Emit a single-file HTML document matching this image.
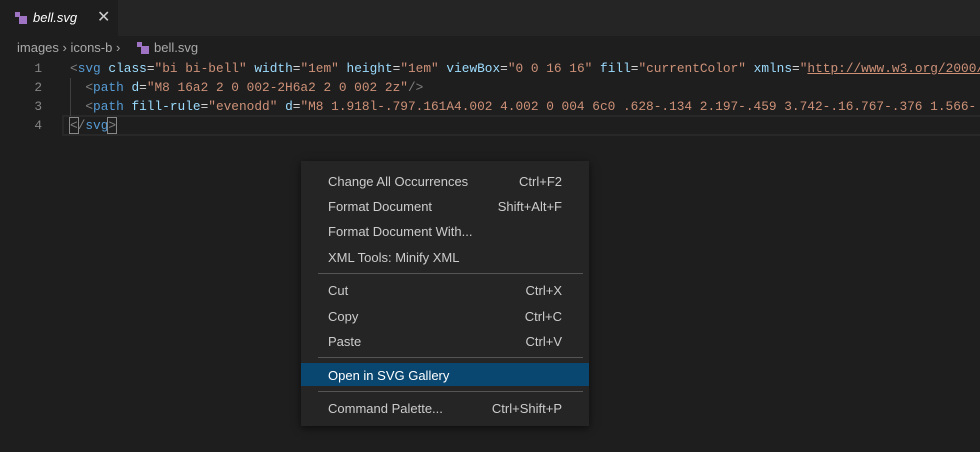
<!DOCTYPE html>
<html><head><style>
*{margin:0;padding:0;box-sizing:border-box}
body{width:980px;height:452px;background:#1e1e1e;overflow:hidden;position:relative;font-family:"Liberation Sans",sans-serif}
.tabbar{position:absolute;left:0;top:0;width:980px;height:36px;background:#252526}
.tab{position:absolute;left:0;top:0;width:118px;height:36px;background:#1e1e1e}
.tab .name{position:absolute;left:33px;top:10px;font-size:13px;font-style:italic;color:#fff}
.tab .x{position:absolute;left:97px;top:7px;font-size:16px;color:#ccc}
.icon{position:absolute;width:12px;height:12px}
.crumb{position:absolute;top:40px;font-size:13px;color:#a9a9a9;white-space:pre}
.code{position:absolute;left:0;top:59px;font-family:"Liberation Mono",monospace;font-size:12.8px}
.ln{position:absolute;left:0;width:42px;text-align:right;color:#858585;height:19px;line-height:19px}
.cl{position:absolute;left:70px;white-space:pre;height:19px;line-height:19px;color:#d4d4d4}
.t{color:#569cd6}.a{color:#9cdcfe}.s{color:#ce9178}.p{color:#808080}
.menu{position:absolute;left:301px;top:161px;width:288px;height:265px;background:#252526;box-shadow:0 2px 8px rgba(0,0,0,.6);font-size:13px;color:#ccc}
.it{position:absolute;left:0;width:288px;height:24px;line-height:24px}
.it .l{position:absolute;left:27px}.it .r{position:absolute;right:27px}
.sep{position:absolute;left:17px;width:265px;height:1px;background:#555}
</style></head><body>
<div class="tabbar"><div class="tab">
<svg class="icon" style="left:15px;top:12px" viewBox="0 0 12 12"><rect x="0" y="0" width="5" height="5" fill="#a074c4"/><rect x="4" y="4" width="8" height="8" fill="#a074c4"/></svg>
<span class="name">bell.svg</span><span class="x">✕</span></div></div>
<div class="crumb" style="left:17px">images › icons-b ›</div>
<div class="crumb" style="left:154px">bell.svg</div>
<svg class="icon" style="left:137px;top:42px" viewBox="0 0 12 12"><rect x="0" y="0" width="5" height="5" fill="#a074c4"/><rect x="4" y="4" width="8" height="8" fill="#a074c4"/></svg>
<div class="code">
<div class="ln" style="top:0">1</div><div class="ln" style="top:19px">2</div><div class="ln" style="top:38px">3</div><div class="ln" style="top:57px">4</div>
<div class="cl" style="top:0"><span class="p">&lt;</span><span class="t">svg</span> <span class="a">class</span>=<span class="s">"bi bi-bell"</span> <span class="a">width</span>=<span class="s">"1em"</span> <span class="a">height</span>=<span class="s">"1em"</span> <span class="a">viewBox</span>=<span class="s">"0 0 16 16"</span> <span class="a">fill</span>=<span class="s">"currentColor"</span> <span class="a">xmlns</span>=<span class="s">"<u>http://www.w3.org/2000/</u></span></div>
<div class="cl" style="top:19px">  <span class="p">&lt;</span><span class="t">path</span> <span class="a">d</span>=<span class="s">"M8 16a2 2 0 002-2H6a2 2 0 002 2z"</span><span class="p">/&gt;</span></div>
<div class="cl" style="top:38px">  <span class="p">&lt;</span><span class="t">path</span> <span class="a">fill-rule</span>=<span class="s">"evenodd"</span> <span class="a">d</span>=<span class="s">"M8 1.918l-.797.161A4.002 4.002 0 004 6c0 .628-.134 2.197-.459 3.742-.16.767-.376 1.566-</span></div>
<div class="cl" style="top:57px"><span class="p" style="outline:1px solid #888">&lt;</span><span class="p">/</span><span class="t">svg</span><span class="p" style="outline:1px solid #888">&gt;</span></div>
<div style="position:absolute;left:70px;top:19px;width:1px;height:38px;background:#404040"></div>
<div style="position:absolute;left:62px;top:56px;width:918px;height:21px;border:2px solid #282828;border-right:none;z-index:-1"></div>
</div>
<div class="menu">
<div class="it" style="top:9px"><span class="l">Change All Occurrences</span><span class="r">Ctrl+F2</span></div>
<div class="it" style="top:34px"><span class="l">Format Document</span><span class="r">Shift+Alt+F</span></div>
<div class="it" style="top:59px"><span class="l">Format Document With...</span></div>
<div class="it" style="top:85px"><span class="l">XML Tools: Minify XML</span></div>
<div class="sep" style="top:112px"></div>
<div class="it" style="top:118px"><span class="l">Cut</span><span class="r">Ctrl+X</span></div>
<div class="it" style="top:144px"><span class="l">Copy</span><span class="r">Ctrl+C</span></div>
<div class="it" style="top:169px"><span class="l">Paste</span><span class="r">Ctrl+V</span></div>
<div class="sep" style="top:196px"></div>
<div class="it" style="top:202px;background:#094771;color:#fff;height:23px;line-height:25px"><span class="l">Open in SVG Gallery</span></div>
<div class="sep" style="top:230px"></div>
<div class="it" style="top:236px"><span class="l">Command Palette...</span><span class="r">Ctrl+Shift+P</span></div>
</div>
</body></html>
